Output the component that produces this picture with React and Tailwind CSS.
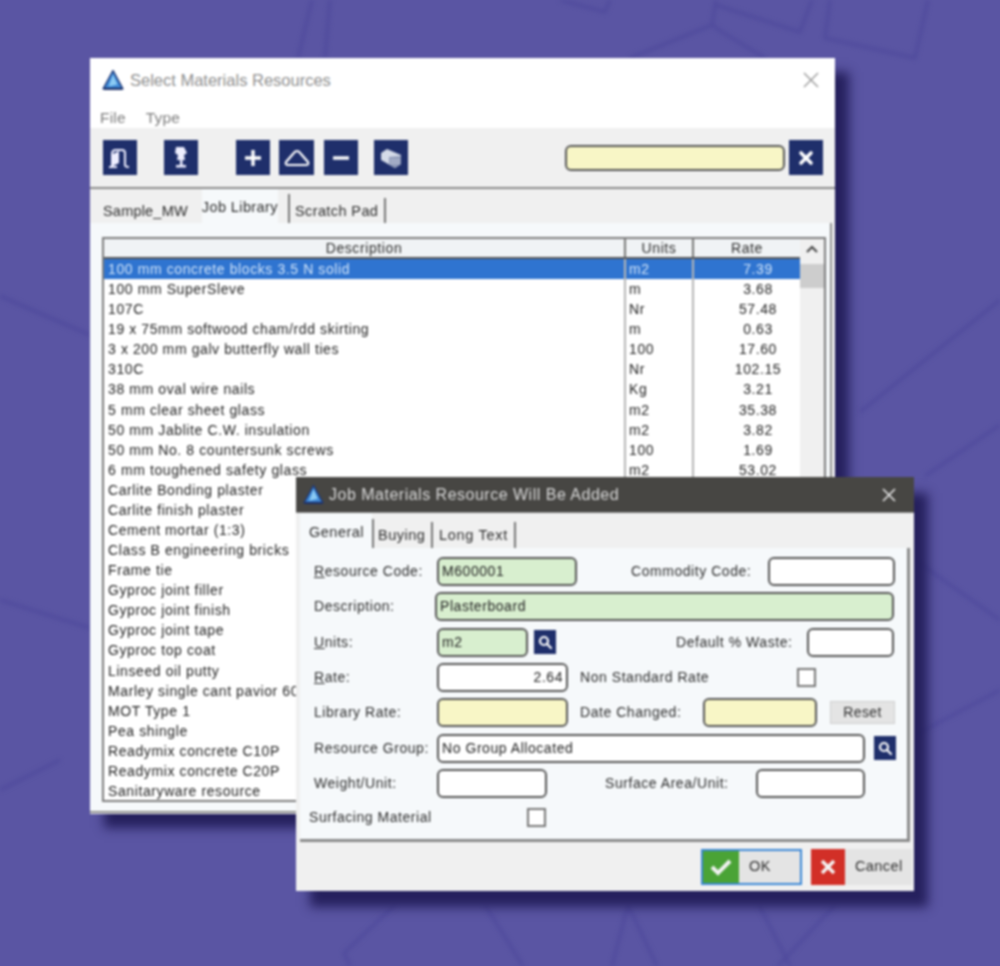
import React from 'react';

const rows = [
  ['100 mm concrete blocks 3.5 N solid', 'm2', '7.39'],
  ['100 mm SuperSleve', 'm', '3.68'],
  ['107C', 'Nr', '57.48'],
  ['19 x 75mm softwood cham/rdd skirting', 'm', '0.63'],
  ['3 x 200 mm galv butterfly wall ties', '100', '17.60'],
  ['310C', 'Nr', '102.15'],
  ['38 mm oval wire nails', 'Kg', '3.21'],
  ['5 mm clear sheet glass', 'm2', '35.38'],
  ['50 mm Jablite C.W. insulation', 'm2', '3.82'],
  ['50 mm No. 8 countersunk screws', '100', '1.69'],
  ['6 mm toughened safety glass', 'm2', '53.02'],
  ['Carlite Bonding plaster'],
  ['Carlite finish plaster'],
  ['Cement mortar (1:3)'],
  ['Class B engineering bricks'],
  ['Frame tie'],
  ['Gyproc joint filler'],
  ['Gyproc joint finish'],
  ['Gyproc joint tape'],
  ['Gyproc top coat'],
  ['Linseed oil putty'],
  ['Marley single cant pavior 600'],
  ['MOT Type 1'],
  ['Pea shingle'],
  ['Readymix concrete C10P'],
  ['Readymix concrete C20P'],
  ['Sanitaryware resource'],
];

const Backdrop = () => (
  <svg className="absolute inset-0 blur-[2px]" width="1000" height="966" fill="none" stroke="#4f4a9c" strokeWidth="3" strokeLinejoin="round">
    <path d="M312 0 L298 58 M330 0 L325 58" />
    <path d="M560 0 L605 12 L610 0" />
    <path d="M716 0 L712 25 L630 58 M712 25 L722 32 L765 58 M716 5 L800 32 L812 0" />
    <path d="M830 0 L825 38 L915 58 L928 0" />
    <path d="M0 296 L90 335 M0 600 L90 628 M0 790 L60 760" />
    <path d="M860 412 L1000 300 M925 476 L1000 425" />
    <path d="M915 560 L1000 620 M915 735 L1000 690" />
    <path d="M395 905 L344 953 L350 966 M485 905 L523 966" />
    <path d="M628 905 L612 966 M628 905 L657 966" />
    <path d="M759 905 L790 966 M835 905 L778 966" />
  </svg>
);

const Logo = ({ className }) => (
  <svg className={className} viewBox="0 0 20 20">
    <path d="M10 1.5 L19 18 L1 18 Z" fill="#3f8ad8" stroke="#1f3a78" strokeWidth="1.3" strokeLinejoin="round" />
    <path d="M10 5 L6 16 L14 14 Z" fill="#8ccbf3" />
    <path d="M1.5 18 L18.5 18" stroke="#1c2f66" strokeWidth="2" />
  </svg>
);

const NavyButton = ({ className = 'w-[34px] h-[35px]', children }) => (
  <div className={`${className} bg-[#1f2f6b] flex items-center justify-center shrink-0`}>{children}</div>
);

const SearchBtn = () => (
  <NavyButton className="w-[22px] h-[24px]">
    <svg width="16" height="16" viewBox="0 0 16 16" fill="none" stroke="#fff" strokeWidth="2.2">
      <circle cx="7" cy="7" r="4" />
      <path d="M10 10 L14 14" strokeLinecap="round" />
    </svg>
  </NavyButton>
);

const Input = ({ className = '', children }) => (
  <div className={`h-[29px] rounded-[6px] border-2 border-[#555] px-[3px] flex items-center text-[14px] text-[#222] tracking-[0.55px] shrink-0 ${className}`}>
    {children}
  </div>
);

const Check = () => <div className="w-[19px] h-[19px] border-2 border-[#777] bg-white shrink-0" />;

const Label = ({ className = '', children }) => (
  <span className={`text-[14px] text-[#2c2c2c] whitespace-nowrap tracking-[0.55px] shrink-0 ${className}`}>{children}</span>
);

const Sep = ({ className = '' }) => <div className={`w-[2px] bg-[#777] ${className}`} />;

const MaterialsWindow = () => (
  <div className="absolute left-[90px] top-[58px] w-[745px] h-[756px] bg-[#f0f0f0] flex flex-col shadow-[14px_14px_10px_rgba(35,30,90,0.95)]">
    <div className="bg-white h-[70px] shrink-0">
      <div className="h-[44px] flex items-center pl-[12px] pr-[15px]">
        <Logo className="w-[22px] h-[22px]" />
        <span className="ml-[6px] text-[16.5px] text-[#8f8f8f]">Select Materials Resources</span>
        <svg className="ml-auto" width="18" height="18" viewBox="0 0 18 18" stroke="#a0a0a0" strokeWidth="1.5">
          <path d="M2 2 L16 16 M16 2 L2 16" />
        </svg>
      </div>
      <div className="flex items-center gap-[20px] pl-[10px] pt-[6px] text-[15.5px] text-[#7c7c7c] h-[26px] tracking-[0.2px]">
        <span>File</span>
        <span>Type</span>
      </div>
    </div>
    <div className="h-[61px] shrink-0 border-b-2 border-[#8a8a8a] flex items-center pl-[13px] pr-[12px]">
      <NavyButton>
        <svg width="26" height="26" viewBox="0 0 26 26" fill="none" stroke="#eef" strokeWidth="2">
          <path d="M2 22 H10 M5 21 V9 Q5 5 9 5 H15 Q18 5 18 8 V20 Q18 22 22 22" />
          <path d="M6 9 L12 6 V18 L6 21 Z" fill="#eef" stroke="none" />
        </svg>
      </NavyButton>
      <NavyButton className="w-[34px] h-[35px] ml-[27px]">
        <svg width="24" height="28" viewBox="0 0 24 28" fill="#eef">
          <path d="M7 3 H15 L18 9 L15 11 L16 16 H8 L9 11 L6 9 Z" />
          <rect x="11" y="16" width="2.5" height="5" />
          <rect x="7" y="21" width="10" height="2.5" />
        </svg>
      </NavyButton>
      <NavyButton className="w-[34px] h-[35px] ml-[38px]">
        <svg width="20" height="20" viewBox="0 0 20 20" stroke="#fff" strokeWidth="3.4">
          <path d="M10 2 V18 M2 10 H18" />
        </svg>
      </NavyButton>
      <NavyButton className="w-[35px] h-[35px] ml-[9px]">
        <svg width="28" height="20" viewBox="0 0 28 20" fill="none" stroke="#fff" strokeWidth="2.2" strokeLinejoin="round">
          <path d="M14 3 Q16 3 18 6 L25 14 Q26 17 23 17 H5 Q2 17 3 14 L10 6 Q12 3 14 3 Z" />
        </svg>
      </NavyButton>
      <NavyButton className="w-[34px] h-[35px] ml-[10px]">
        <svg width="20" height="20" viewBox="0 0 20 20" stroke="#fff" strokeWidth="3.4">
          <path d="M2 10 H18" />
        </svg>
      </NavyButton>
      <NavyButton className="w-[34px] h-[35px] ml-[16px]">
        <svg width="26" height="26" viewBox="0 0 26 26">
          <path d="M3 8 L9 4 L23 10 L23 19 L17 23 L3 15 Z" fill="#d5dbe8" />
          <path d="M11 12 L23 11 L23 19 L17 23 L11 19 Z" fill="#8f9ab8" />
          <path d="M12 15 L22 15 M12 18 L22 18" stroke="#d5dbe8" strokeWidth="0.8" />
        </svg>
      </NavyButton>
      <div className="ml-auto w-[220px] h-[26px] rounded-[6px] border-2 border-[#555] bg-[#f8f6c6]" />
      <NavyButton className="w-[34px] h-[35px] ml-[4px]">
        <svg width="18" height="18" viewBox="0 0 18 18" stroke="#fff" strokeWidth="3.6" strokeLinecap="round">
          <path d="M4 4 L14 14 M14 4 L4 14" />
        </svg>
      </NavyButton>
    </div>
    <div className="h-[34px] shrink-0 flex items-center pl-[13px] text-[14.5px] text-[#2c2c2c] tracking-[0.4px]">
      <span className="pt-[12px] tracking-[0.2px]">Sample_MW</span>
      <span className="ml-[14px] self-stretch flex items-center bg-[#f6f9fb] pt-[4px]">Job Library</span>
      <Sep className="h-[30px] ml-[10px] mt-[6px]" />
      <span className="ml-[5px] pt-[12px]">Scratch Pad</span>
      <Sep className="h-[25px] ml-[6px] mt-[8px]" />
    </div>
    <div className="flex-1 min-h-0 bg-[#f6f9fb] border-r-2 border-b-2 border-[#8f8f8f] mr-[3px] mb-[1px] pl-[12px] pr-[4px] pt-[14px] pb-[9px]">
      <div className="h-full border-2 border-[#7c7c7c] bg-white flex overflow-hidden">
        <div className="w-[696px] shrink-0 flex flex-col">
          <div className="grid grid-cols-[520px_68px_108px] h-[20px] shrink-0 border-b-2 border-[#555] bg-[#f0f3f5] text-[14px] text-[#2c2c2c] text-center leading-[18px] tracking-[0.6px]">
            <span>Description</span>
            <span className="border-l-2 border-[#777]">Units</span>
            <span className="border-l-2 border-[#777]">Rate</span>
          </div>
          {rows.map((r, i) => (
            <div
              key={r[0]}
              className={`grid grid-cols-[520px_68px_108px] h-[20.08px] shrink-0 text-[14px] leading-[20px] whitespace-nowrap tracking-[0.6px] ${i === 0 ? 'bg-[#2f74d0] text-[#d2e5fa]' : 'text-[#222]'}`}
            >
              <span className="pl-[4px]">{r[0]}</span>
              <span className="border-l-2 border-[#b5b5b5] pl-[3px]">{r[1]}</span>
              <span className="border-l-2 border-[#b5b5b5] pl-[22px] text-center">{r[2]}</span>
            </div>
          ))}
        </div>
        <div className="flex-1 bg-[#f0f0f0] flex flex-col items-center pt-[6px]">
          <svg width="12" height="8" viewBox="0 0 12 8" fill="none" stroke="#444" strokeWidth="2">
            <path d="M1 7 L6 2 L11 7" />
          </svg>
          <div className="w-full h-[24px] mt-[11px] bg-[#cdcdcd]" />
        </div>
      </div>
    </div>
  </div>
);

const JobDialog = () => (
  <div className="absolute left-[296px] top-[477px] w-[618px] h-[414px] bg-[#f0f0f0] flex flex-col shadow-[14px_16px_10px_rgba(35,30,90,0.95)]">
    <div className="h-[36px] shrink-0 bg-[#474643] flex items-center pl-[7px] pr-[17px] border-b border-[#888]">
      <Logo className="w-[21px] h-[21px]" />
      <span className="ml-[5px] text-[16px] text-[#d8d8d8] tracking-[0.5px]">Job Materials Resource Will Be Added</span>
      <svg className="ml-auto" width="16" height="16" viewBox="0 0 16 16" stroke="#e8e8e8" strokeWidth="1.6">
        <path d="M2 2 L14 14 M14 2 L2 14" />
      </svg>
    </div>
    <div className="h-[35px] shrink-0 flex items-center pl-[4px] text-[14.5px] text-[#2c2c2c] tracking-[0.5px]">
      <span className="self-stretch flex items-center bg-[#f6f9fb] pl-[9px] pr-[7px] pt-[4px] w-[72px]">General</span>
      <Sep className="h-[29px] mt-[6px]" />
      <span className="ml-[4px] pt-[10px] w-[53px]">Buying</span>
      <Sep className="h-[26px] mt-[8px]" />
      <span className="ml-[6px] pt-[10px] w-[75px] tracking-[0.7px]">Long Text</span>
      <Sep className="h-[26px] mt-[8px]" />
    </div>
    <div className="h-[294px] shrink-0 ml-[4px] mr-[4px] bg-[#f6f9fb] border-r-[3px] border-b-[3px] border-[#8a8a8a] pt-[9px] pl-[14px] flex flex-col gap-[6.33px]">
      <div className="flex items-center h-[29px]">
        <Label className="w-[123px]"><u>R</u>esource Code:</Label>
        <Input className="w-[140px] bg-[#d8efcf]">M600001</Input>
        <Label className="ml-[54px] w-[137px]">Commodity Code:</Label>
        <Input className="w-[127px] bg-white" />
      </div>
      <div className="flex items-center h-[29px]">
        <Label className="w-[121px]">Description:</Label>
        <Input className="w-[459px] bg-[#d8efcf]">Plasterboard</Input>
      </div>
      <div className="flex items-center h-[29px]">
        <Label className="w-[123px]"><u>U</u>nits:</Label>
        <Input className="w-[91px] bg-[#d8efcf]">m2</Input>
        <div className="ml-[6px]"><SearchBtn /></div>
        <Label className="ml-[120px] w-[131px]">Default % Waste:</Label>
        <Input className="w-[87px] bg-white" />
      </div>
      <div className="flex items-center h-[29px]">
        <Label className="w-[123px]"><u>R</u>ate:</Label>
        <Input className="w-[131px] bg-white justify-end">2.64</Input>
        <Label className="ml-[12px] w-[217px]">Non Standard Rate</Label>
        <Check />
      </div>
      <div className="flex items-center h-[29px]">
        <Label className="w-[123px]">Library Rate:</Label>
        <Input className="w-[131px] bg-[#f8f6c6]" />
        <Label className="ml-[12px] w-[123px]">Date Changed:</Label>
        <Input className="w-[114px] bg-[#f8f6c6]" />
        <div className="ml-[13px] w-[65px] h-[23px] bg-[#e4e4e4] border border-[#d0d0d0] flex items-center justify-center text-[14px] text-[#2c2c2c] tracking-[0.4px]">Reset</div>
      </div>
      <div className="flex items-center h-[29px]">
        <Label className="w-[123px]">Resource Group:</Label>
        <Input className="w-[428px] bg-white">No Group Allocated</Input>
        <div className="ml-[9px]"><SearchBtn /></div>
      </div>
      <div className="flex items-center h-[29px]">
        <Label className="w-[123px]">Weight/Unit:</Label>
        <Input className="w-[110px] bg-white" />
        <Label className="ml-[58px] w-[151px]">Surface Area/Unit:</Label>
        <Input className="w-[109px] bg-white" />
      </div>
      <div className="flex items-center h-[20px] mt-[3px] -ml-[5px]">
        <Label className="w-[218px]">Surfacing Material</Label>
        <Check />
      </div>
    </div>
    <div className="flex-1 flex items-center justify-end pr-[2px] gap-[9px] text-[14.5px] text-[#2c2c2c] tracking-[0.4px]">
      <div className="w-[101px] h-[36px] bg-[#e4e4e4] border-2 border-[#3b87d6] flex items-center">
        <div className="w-[36px] h-full bg-[#4aa336] flex items-center justify-center">
          <svg width="22" height="18" viewBox="0 0 22 18" fill="none" stroke="#f2f2f2" strokeWidth="4">
            <path d="M2 9 L8 15 L20 3" />
          </svg>
        </div>
        <span className="ml-[10px]">OK</span>
      </div>
      <div className="w-[101px] h-[36px] bg-[#e4e4e4] flex items-center">
        <div className="w-[34px] h-full bg-[#d22f27] flex items-center justify-center">
          <svg width="16" height="16" viewBox="0 0 16 16" stroke="#f5f5f5" strokeWidth="3.4">
            <path d="M2 2 L14 14 M14 2 L2 14" />
          </svg>
        </div>
        <span className="ml-[10px]">Cancel</span>
      </div>
    </div>
  </div>
);

const App = () => {
  return (
    <div className="relative w-[1000px] h-[966px] bg-[#5a55a3] overflow-hidden font-['Liberation_Sans',Arial,sans-serif]">
      <Backdrop />
      <div className="absolute inset-0 blur-[0.8px]">
        <MaterialsWindow />
        <JobDialog />
      </div>
    </div>
  );
};

export default App;
